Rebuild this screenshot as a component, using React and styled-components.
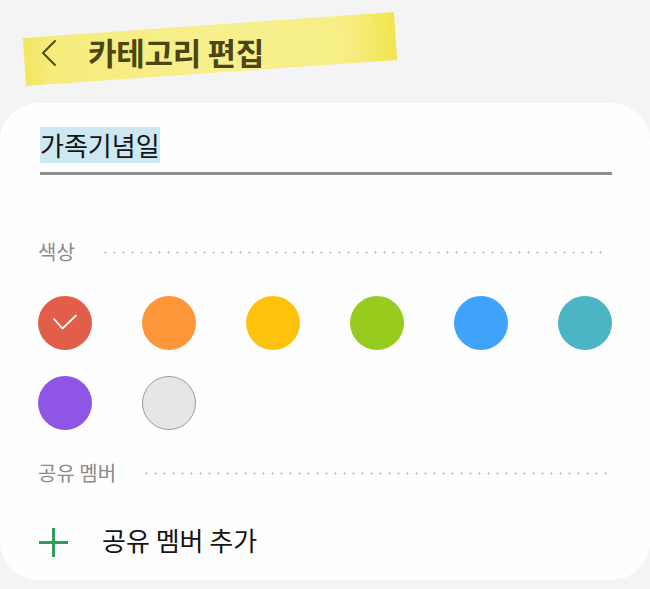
import React from "react";
import styled, { createGlobalStyle } from "styled-components";

const Global = createGlobalStyle`
  html, body { margin: 0; padding: 0; background: #f4f4f4; }
  body { font-family: "Noto Sans CJK KR", "Noto Sans", sans-serif; }
  * { box-sizing: border-box; }
`;

const Page = styled.div`
  width: 650px;
  height: 589px;
  background: #f4f4f4;
  display: flex;
  flex-direction: column;
  overflow: hidden;
`;

const Header = styled.header`
  position: relative;
  height: 103px;
  flex: none;
  display: flex;
  align-items: center;
  padding-left: 40px;
  gap: 18px;
`;

const Highlight = styled.div`
  position: absolute;
  left: 24px;
  top: 25px;
  width: 372px;
  height: 48px;
  transform: rotate(-4deg);
  background: linear-gradient(
    90deg,
    #f2e661 0%,
    #f5ec7c 8%,
    #f7f08e 55%,
    #f6ee86 86%,
    #f2e44e 100%
  );
  filter: blur(0.6px);
  z-index: 0;
`;

const Back = styled.svg`
  position: relative;
  z-index: 1;
  width: 18px;
  height: 28px;
  margin-top: 2px;
`;

const Title = styled.h1`
  position: relative;
  z-index: 1;
  margin: 0;
  font-size: 31px;
  font-weight: 700;
  color: #4b4614;
  letter-spacing: -0.3px;
  margin-left: 12px;
  line-height: 1;
`;

const Card = styled.main`
  flex: none;
  height: 477px;
  background: #fefefe;
  border-radius: 38px;
  padding: 24px 38px 0 40px;
  display: flex;
  flex-direction: column;
`;

const NameField = styled.div`
  border-bottom: 3px solid #8e8e8e;
  padding-bottom: 9px;
`;

const Selected = styled.span`
  display: inline-block;
  background: #cde7f3;
  font-size: 26px;
  line-height: 36px;
  color: #151515;
`;

const SectionHead = styled.div`
  display: flex;
  align-items: center;
  gap: 26px;
  margin-top: ${(p) => p.$top}px;
  margin-left: -2px;
  height: 26px;
`;

const SectionLabel = styled.span`
  font-size: 20px;
  color: #8a8a8a;
  line-height: 26px;
  white-space: nowrap;
`;

const Dots = styled.div`
  flex: 1;
  height: 3px;
  margin-right: 4px;
  background-image: radial-gradient(circle, #bdbdbd 0.9px, transparent 1.2px);
  background-size: 9px 3px;
  background-repeat: repeat-x;
`;

const Swatches = styled.div`
  display: grid;
  grid-template-columns: repeat(6, 54px);
  column-gap: 50px;
  row-gap: 26px;
  margin-top: 31px;
  margin-left: -2px;
`;

const Swatch = styled.button`
  width: 54px;
  height: 54px;
  border-radius: 50%;
  border: ${(p) => (p.$outlined ? "1px solid #9c9c9c" : "none")};
  background: ${(p) => p.$color};
  padding: 0;
  display: flex;
  align-items: center;
  justify-content: center;
  cursor: pointer;
`;

const AddRow = styled.div`
  display: flex;
  align-items: center;
  gap: 34px;
  margin-top: 36px;
  margin-left: -1px;
  height: 40px;
`;

const AddText = styled.span`
  font-size: 26px;
  color: #141414;
  line-height: 40px;
  margin-top: -4px;
`;

const colors = [
  "#e05e4a",
  "#fd9639",
  "#ffc20c",
  "#97cc1f",
  "#3fa2fb",
  "#4bb5c4",
  "#8f55e5",
  "#e6e6e6",
];

export default function App() {
  return (
    <>
      <Global />
      <Page>
        <Header>
          <Highlight />
          <Back viewBox="0 0 18 28">
            <path d="M15 2 L3 14 L15 26" fill="none" stroke="#4f4a18" strokeWidth="2" strokeLinecap="round" strokeLinejoin="round" />
          </Back>
          <Title>카테고리 편집</Title>
        </Header>
        <Card>
          <NameField>
            <Selected>가족기념일</Selected>
          </NameField>
          <SectionHead $top={64}>
            <SectionLabel>색상</SectionLabel>
            <Dots />
          </SectionHead>
          <Swatches>
            {colors.map((c, i) => (
              <Swatch key={c} $color={c} $outlined={i === 7}>
                {i === 0 && (
                  <svg width="26" height="18" viewBox="0 0 26 18">
                    <path d="M2 5 L10.5 14.5 L24 1.5" fill="none" stroke="#fff" strokeWidth="1.8" strokeLinecap="round" strokeLinejoin="round" />
                  </svg>
                )}
              </Swatch>
            ))}
          </Swatches>
          <SectionHead $top={30}>
            <SectionLabel>공유 멤버</SectionLabel>
            <Dots />
          </SectionHead>
          <AddRow>
            <svg width="29" height="29" viewBox="0 0 29 29">
              <path d="M14.5 0 V29 M0 14.5 H29" stroke="#2f9e5c" strokeWidth="3" />
            </svg>
            <AddText>공유 멤버 추가</AddText>
          </AddRow>
        </Card>
      </Page>
    </>
  );
}
